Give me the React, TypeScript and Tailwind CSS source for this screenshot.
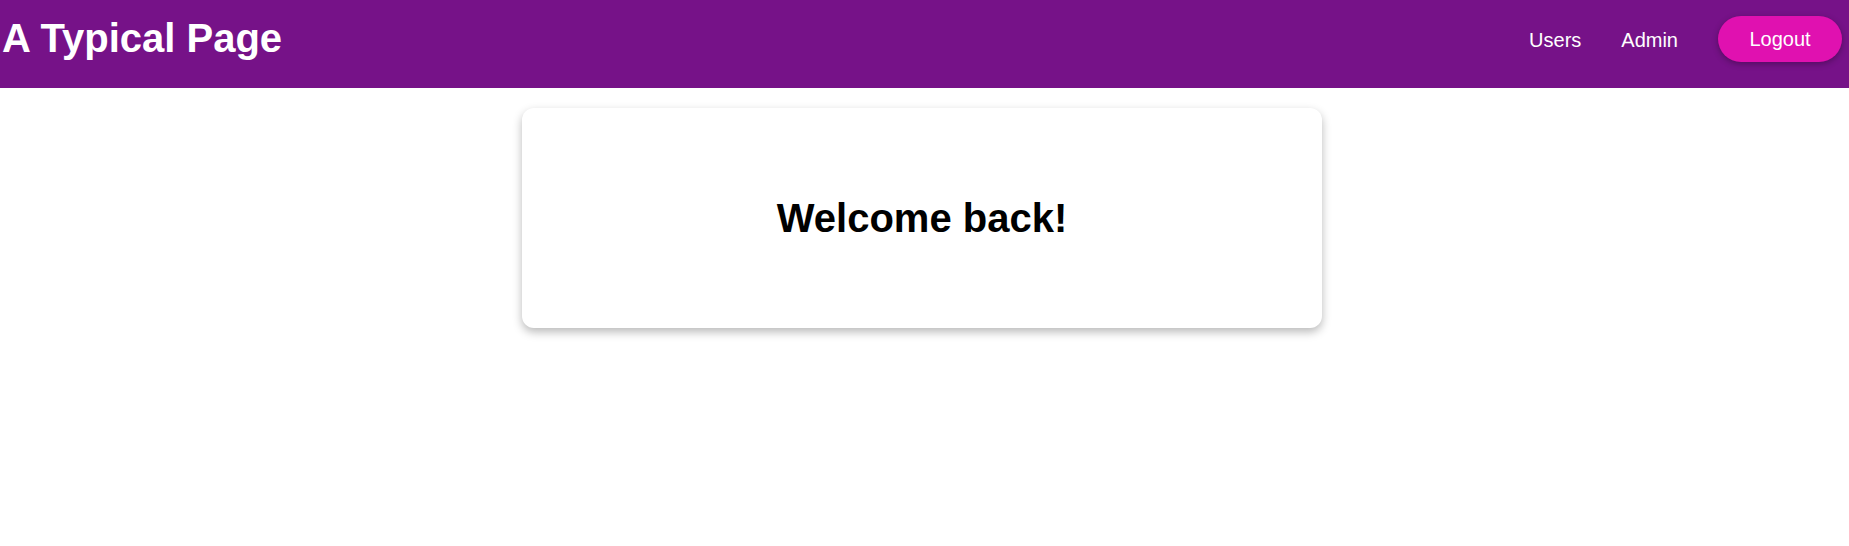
export default function App() {
  return (
    <div className="min-h-[546px] bg-white font-['Liberation_Sans',Arial,sans-serif]">
      <header className="flex h-[88px] items-center justify-between bg-[#761288] pl-[2px] pr-[7px]">
        <h1 className="-mt-[12px] text-[40px] font-bold leading-none text-white">A Typical Page</h1>
        <nav className="flex items-center gap-[40px] text-[20px] text-white">
          <a className="-mt-[9px]">Users</a>
          <a className="-mt-[9px]">Admin</a>
          <button className="-mt-[10px] h-[46px] w-[124px] rounded-full bg-[#e011b0] text-[20px] text-white shadow-[0_2px_6px_rgba(0,0,0,0.3)]">
            Logout
          </button>
        </nav>
      </header>

      <main className="flex justify-center pr-[5px] pt-[20px]">
        <div className="flex h-[220px] w-[800px] items-center justify-center rounded-[12px] bg-white shadow-[0_4px_10px_rgba(0,0,0,0.28)]">
          <h2 className="text-[40px] font-bold leading-none text-black">Welcome back!</h2>
        </div>
      </main>
    </div>
  )
}
